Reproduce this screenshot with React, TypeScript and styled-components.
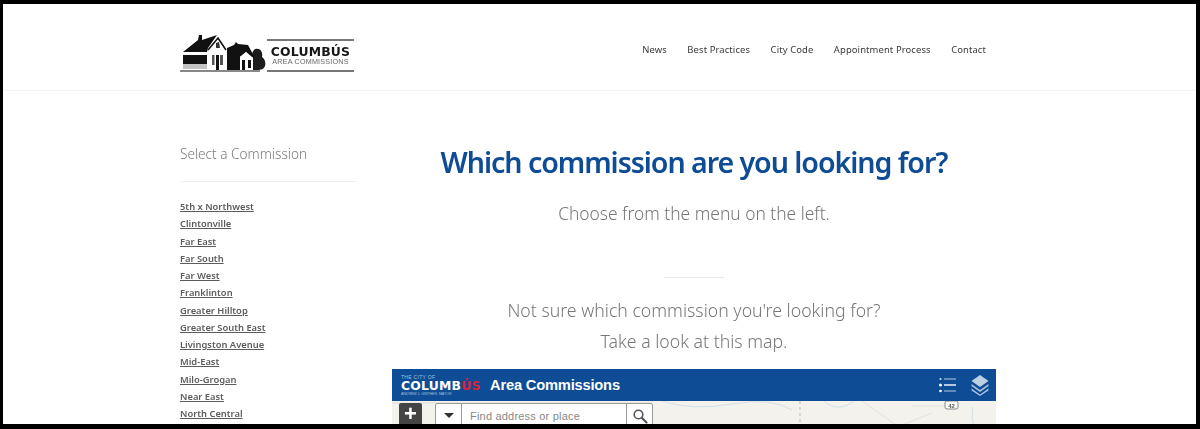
import React from "react";
import styled, { createGlobalStyle } from "styled-components";

const Global = createGlobalStyle`
  html, body { margin: 0; padding: 0; background: #fff; }
  body { font-family: "Noto Sans", "Open Sans", sans-serif; }
  * { box-sizing: border-box; }
`;

const Frame = styled.div`
  width: 1200px;
  height: 429px;
  border-style: solid;
  border-color: #000;
  border-width: 4px 4px 5px 3px;
  overflow: hidden;
  background: #fff;
`;

const Page = styled.div`
  filter: blur(0.4px);
`;

const Header = styled.header`
  height: 87px;
  padding: 0 210px 0 177px;
  display: flex;
  align-items: center;
  justify-content: space-between;
  border-bottom: 1px solid #f3f3f3;
`;

const Brand = styled.a`
  display: flex;
  align-items: flex-start;
  gap: 1px;
  margin-top: 14px;
`;

const Wordmark = styled.div`
  width: 87px;
  height: 33px;
  margin-top: 5px;
  border-top: 2px solid #777;
  border-bottom: 2px solid #777;
  display: flex;
  flex-direction: column;
  align-items: center;
  justify-content: center;
`;

const WordTitle = styled.span`
  font-family: "DejaVu Sans", sans-serif;
  font-size: 12.4px;
  line-height: 13px;
  font-weight: 700;
  color: #161616;
  letter-spacing: 0.2px;
  white-space: nowrap;
`;

const WordSub = styled.span`
  font-family: "Liberation Sans", sans-serif;
  font-size: 7.2px;
  line-height: 8px;
  color: #666;
  letter-spacing: 0.2px;
  white-space: nowrap;
`;

const Nav = styled.nav`
  display: flex;
  gap: 20.5px;
  margin-top: 6px;
`;

const NavLink = styled.a`
  font-family: "Noto Sans", sans-serif;
  font-size: 9.45px;
  line-height: 14px;
  color: #3a3a3a;
  letter-spacing: 0.1px;
`;

const Content = styled.div`
  display: grid;
  grid-template-columns: 177px 604px;
  column-gap: 35px;
  padding: 0 0 0 177px;
`;

const Sidebar = styled.aside`
  padding-top: 52px;
`;

const SideTitle = styled.h2`
  margin: 0;
  font-family: "Noto Sans", sans-serif;
  font-weight: 300;
  font-size: 13.6px;
  line-height: 22px;
  color: #7a7a7a;
  padding-bottom: 16px;
  border-bottom: 1px solid #f0f0f0;
`;

const SideList = styled.ul`
  list-style: none;
  margin: 14px 0 0;
  padding: 0;
`;

const SideItem = styled.li`
  height: 17.25px;
  line-height: 17.25px;
`;

const SideLink = styled.a`
  font-family: "Noto Sans", sans-serif;
  font-size: 9.35px;
  font-weight: 600;
  color: #5c5c5c;
  text-decoration: underline;
`;

const Main = styled.main`
  padding-top: 52px;
  display: flex;
  flex-direction: column;
  align-items: center;
  text-align: center;
`;

const Title = styled.h1`
  margin: 0;
  font-family: "Noto Sans", sans-serif;
  font-weight: 600;
  font-size: 28.6px;
  line-height: 38px;
  letter-spacing: -1.05px;
  color: #0f4c96;
  white-space: nowrap;
`;

const Lead = styled.p`
  margin: 17px 0 0;
  font-weight: 300;
  font-size: 17.4px;
  line-height: 31px;
  color: #777;
`;

const Rule = styled.hr`
  width: 60px;
  height: 1px;
  margin: 48px 0 17px;
  border: 0;
  background: #e8e8e8;
`;

const Prompt = styled.div`
  font-weight: 300;
  font-size: 17.7px;
  line-height: 31px;
  color: #777;
`;

const MapFrame = styled.div`
  position: relative;
  width: 604px;
  height: 60px;
  margin-top: 12px;
  background: #f4f2ec;
  overflow: hidden;
  text-align: left;
`;

const MapBanner = styled.div`
  height: 32px;
  background: #0f4c96;
  display: flex;
  align-items: center;
  padding: 0 7px 0 9px;
  position: relative;
  z-index: 1;
`;

const CityLogo = styled.div`
  display: flex;
  flex-direction: column;
  width: 80px;
  margin-right: 9px;
`;

const CityTop = styled.span`
  font-family: "Liberation Sans", sans-serif;
  font-size: 5px;
  line-height: 6px;
  letter-spacing: 0.3px;
  color: #a9c0dc;
`;

const CityName = styled.span`
  font-family: "DejaVu Sans", sans-serif;
  font-weight: 700;
  font-size: 12.4px;
  line-height: 12px;
  letter-spacing: 0.2px;
  color: #fff;
  white-space: nowrap;
`;

const CityRed = styled.span`
  color: #d8243a;
`;

const CityTag = styled.span`
  font-family: "Liberation Sans", sans-serif;
  font-size: 3.5px;
  line-height: 5px;
  color: #a9c0dc;
  white-space: nowrap;
`;

const BannerTitle = styled.span`
  font-family: "Liberation Sans", sans-serif;
  font-weight: 700;
  font-size: 14.7px;
  letter-spacing: -0.2px;
  color: #fff;
`;

const BannerIcons = styled.div`
  margin-left: auto;
  display: flex;
  align-items: center;
  gap: 13px;
`;

const MapArt = styled.svg`
  position: absolute;
  left: 0;
  top: 32px;
`;

const ZoomButton = styled.div`
  position: absolute;
  left: 7px;
  top: 34px;
  width: 23px;
  height: 23px;
  background: #444;
  border-radius: 2px;
  color: #fff;
  font-family: "Liberation Sans", sans-serif;
  font-size: 22px;
  font-weight: 700;
  line-height: 21px;
  text-align: center;
`;

const SearchBar = styled.div`
  position: absolute;
  left: 43px;
  top: 34px;
  width: 218px;
  height: 26px;
  display: flex;
  background: #fff;
  border: 1px solid #9a9a9a;
  border-radius: 2px;
`;

const SearchCaret = styled.div`
  width: 26px;
  border-right: 1px solid #9a9a9a;
  display: flex;
  justify-content: center;
  padding-top: 9px;
  &::before {
    content: "";
    width: 0;
    height: 0;
    border-left: 5px solid transparent;
    border-right: 5px solid transparent;
    border-top: 5px solid #333;
  }
`;

const SearchInput = styled.div`
  flex: 1;
  padding: 5px 0 0 8px;
  font-family: "Liberation Sans", sans-serif;
  font-size: 11px;
  line-height: 14px;
  letter-spacing: 0.2px;
  color: #888;
`;

const SearchButton = styled.div`
  width: 26px;
  border-left: 1px solid #9a9a9a;
  display: flex;
  justify-content: center;
  padding-top: 4px;
`;

const commissions = [
  "5th x Northwest",
  "Clintonville",
  "Far East",
  "Far South",
  "Far West",
  "Franklinton",
  "Greater Hilltop",
  "Greater South East",
  "Livingston Avenue",
  "Mid-East",
  "Milo-Grogan",
  "Near East",
  "North Central",
];

const navItems = ["News", "Best Practices", "City Code", "Appointment Process", "Contact"];

const HousesLogo = () => (
  <svg width="86" height="40" viewBox="0 0 86 40" aria-hidden="true">
    <path d="M72 36V20c1-4 3-6 6-5 3 0 5 4 4 8 3 2 4 6 3 9-1 3-4 4-7 4z" fill="#1c1c1c" />
    <path d="M3 18 18 6l1-5h3v5L37 1l-9 13-1 4z" fill="#111" />
    <path d="M47 14l7-3 2-3 2 2 10 1 7 13H47z" fill="#111" />
    <path d="M3 21h24v9H3z" fill="#111" />
    <path d="M3 30h24v5H3z" fill="#c4c4c4" />
    <path d="M47 24h14v12H47z" fill="#111" />
    <path d="M28 36V16l10-12 9 13v19z" fill="#fff" />
    <path d="M28 16 38 4l8 12" fill="none" stroke="#111" strokeWidth="1.6" />
    <path d="M36 9l3-1 1 6h-4z" fill="#333" />
    <path d="M32 21h2.5v10H32zM40 21h3v10h-3z" fill="#555" />
    <path d="M36 21h3v15h-3z" fill="#111" />
    <path d="M60 36V22l6-5 7 6v13z" fill="#fff" />
    <path d="M60 22l6-5 7 6" fill="none" stroke="#111" strokeWidth="1.2" />
    <path d="M62 26h3v10h-3zM68 26h3v8h-3z" fill="#111" />
    <path d="M0 36h80v2H0z" fill="#888" />
  </svg>
);

const ListIcon = () => (
  <svg width="20" height="20" viewBox="0 0 20 20" aria-hidden="true">
    <circle cx="2.5" cy="4" r="1.1" fill="#cfdcec" />
    <circle cx="2.5" cy="10" r="1.5" fill="#fff" />
    <circle cx="2.5" cy="16" r="1.3" fill="#fff" />
    <path d="M6 4h12M6 16h12" stroke="#7f9fc6" strokeWidth="1.6" />
    <path d="M6 10h12" stroke="#dfe8f3" strokeWidth="1.6" />
  </svg>
);

const LayersIcon = () => (
  <svg width="18" height="22" viewBox="0 0 18 22" aria-hidden="true">
    <path d="M9 1l8.5 6L9 13 .5 7z" fill="#bcd0e6" />
    <path d="M.5 10l8.5 6 8.5-6V12L9 18 .5 12z" fill="#a9c1dd" />
    <path d="M.5 14.5l8.5 6 8.5-6v2L9 22 .5 16.5z" fill="#a9c1dd" />
  </svg>
);

const SearchGlass = () => (
  <svg width="16" height="16" viewBox="0 0 16 16" aria-hidden="true">
    <circle cx="6.5" cy="6.5" r="4.3" fill="none" stroke="#555" strokeWidth="1.6" />
    <path d="M10 10l4.5 4.5" stroke="#555" strokeWidth="2.2" strokeLinecap="round" />
  </svg>
);

const RoadLines = () => (
  <MapArt width="604" height="28" viewBox="0 0 604 28" aria-hidden="true">
    <path d="M270 0q30 10 70 3t60 6M432 0c8 8 20 8 30 0" fill="none" stroke="#cfe0ea" strokeWidth="1" />
    <path d="M0 2h260" stroke="#dcdcd6" strokeWidth="1" />
    <path d="M408 0v28" stroke="#bdbdb8" strokeWidth="1" strokeDasharray="3 3" />
    <path d="M470 0l40 28M540 12l-40 16M560 5h-40" fill="none" stroke="#e3e1da" strokeWidth="1" />
    <path d="M580 6c2 6-2 10 2 18" fill="none" stroke="#cfe0ea" strokeWidth="1" />
    <rect x="553" y="0" width="13" height="8" rx="2" fill="#fff" stroke="#888" />
    <text x="559.5" y="7" textAnchor="middle" fontSize="6" fontWeight="700" fill="#555" fontFamily="Liberation Sans">
      42
    </text>
  </MapArt>
);

export default function App() {
  return (
    <>
      <Global />
      <Frame>
        <Page>
          <Header>
            <Brand>
              <HousesLogo />
              <Wordmark>
                <WordTitle>COLUMBÚS</WordTitle>
                <WordSub>AREA COMMISSIONS</WordSub>
              </Wordmark>
            </Brand>
            <Nav>
              {navItems.map((n) => (
                <NavLink key={n}>{n}</NavLink>
              ))}
            </Nav>
          </Header>
          <Content>
            <Sidebar>
              <SideTitle>Select a Commission</SideTitle>
              <SideList>
                {commissions.map((c) => (
                  <SideItem key={c}>
                    <SideLink>{c}</SideLink>
                  </SideItem>
                ))}
              </SideList>
            </Sidebar>
            <Main>
              <Title>Which commission are you looking for?</Title>
              <Lead>Choose from the menu on the left.</Lead>
              <Rule />
              <Prompt>
                Not sure which commission you're looking for?
                <br />
                Take a look at this map.
              </Prompt>
              <MapFrame>
                <MapBanner>
                  <CityLogo>
                    <CityTop>THE CITY OF</CityTop>
                    <CityName>
                      COLUMB<CityRed>ÚS</CityRed>
                    </CityName>
                    <CityTag>ANDREW J. GINTHER, MAYOR</CityTag>
                  </CityLogo>
                  <BannerTitle>Area Commissions</BannerTitle>
                  <BannerIcons>
                    <ListIcon />
                    <LayersIcon />
                  </BannerIcons>
                </MapBanner>
                <RoadLines />
                <ZoomButton>+</ZoomButton>
                <SearchBar>
                  <SearchCaret />
                  <SearchInput>Find address or place</SearchInput>
                  <SearchButton>
                    <SearchGlass />
                  </SearchButton>
                </SearchBar>
              </MapFrame>
            </Main>
          </Content>
        </Page>
      </Frame>
    </>
  );
}
